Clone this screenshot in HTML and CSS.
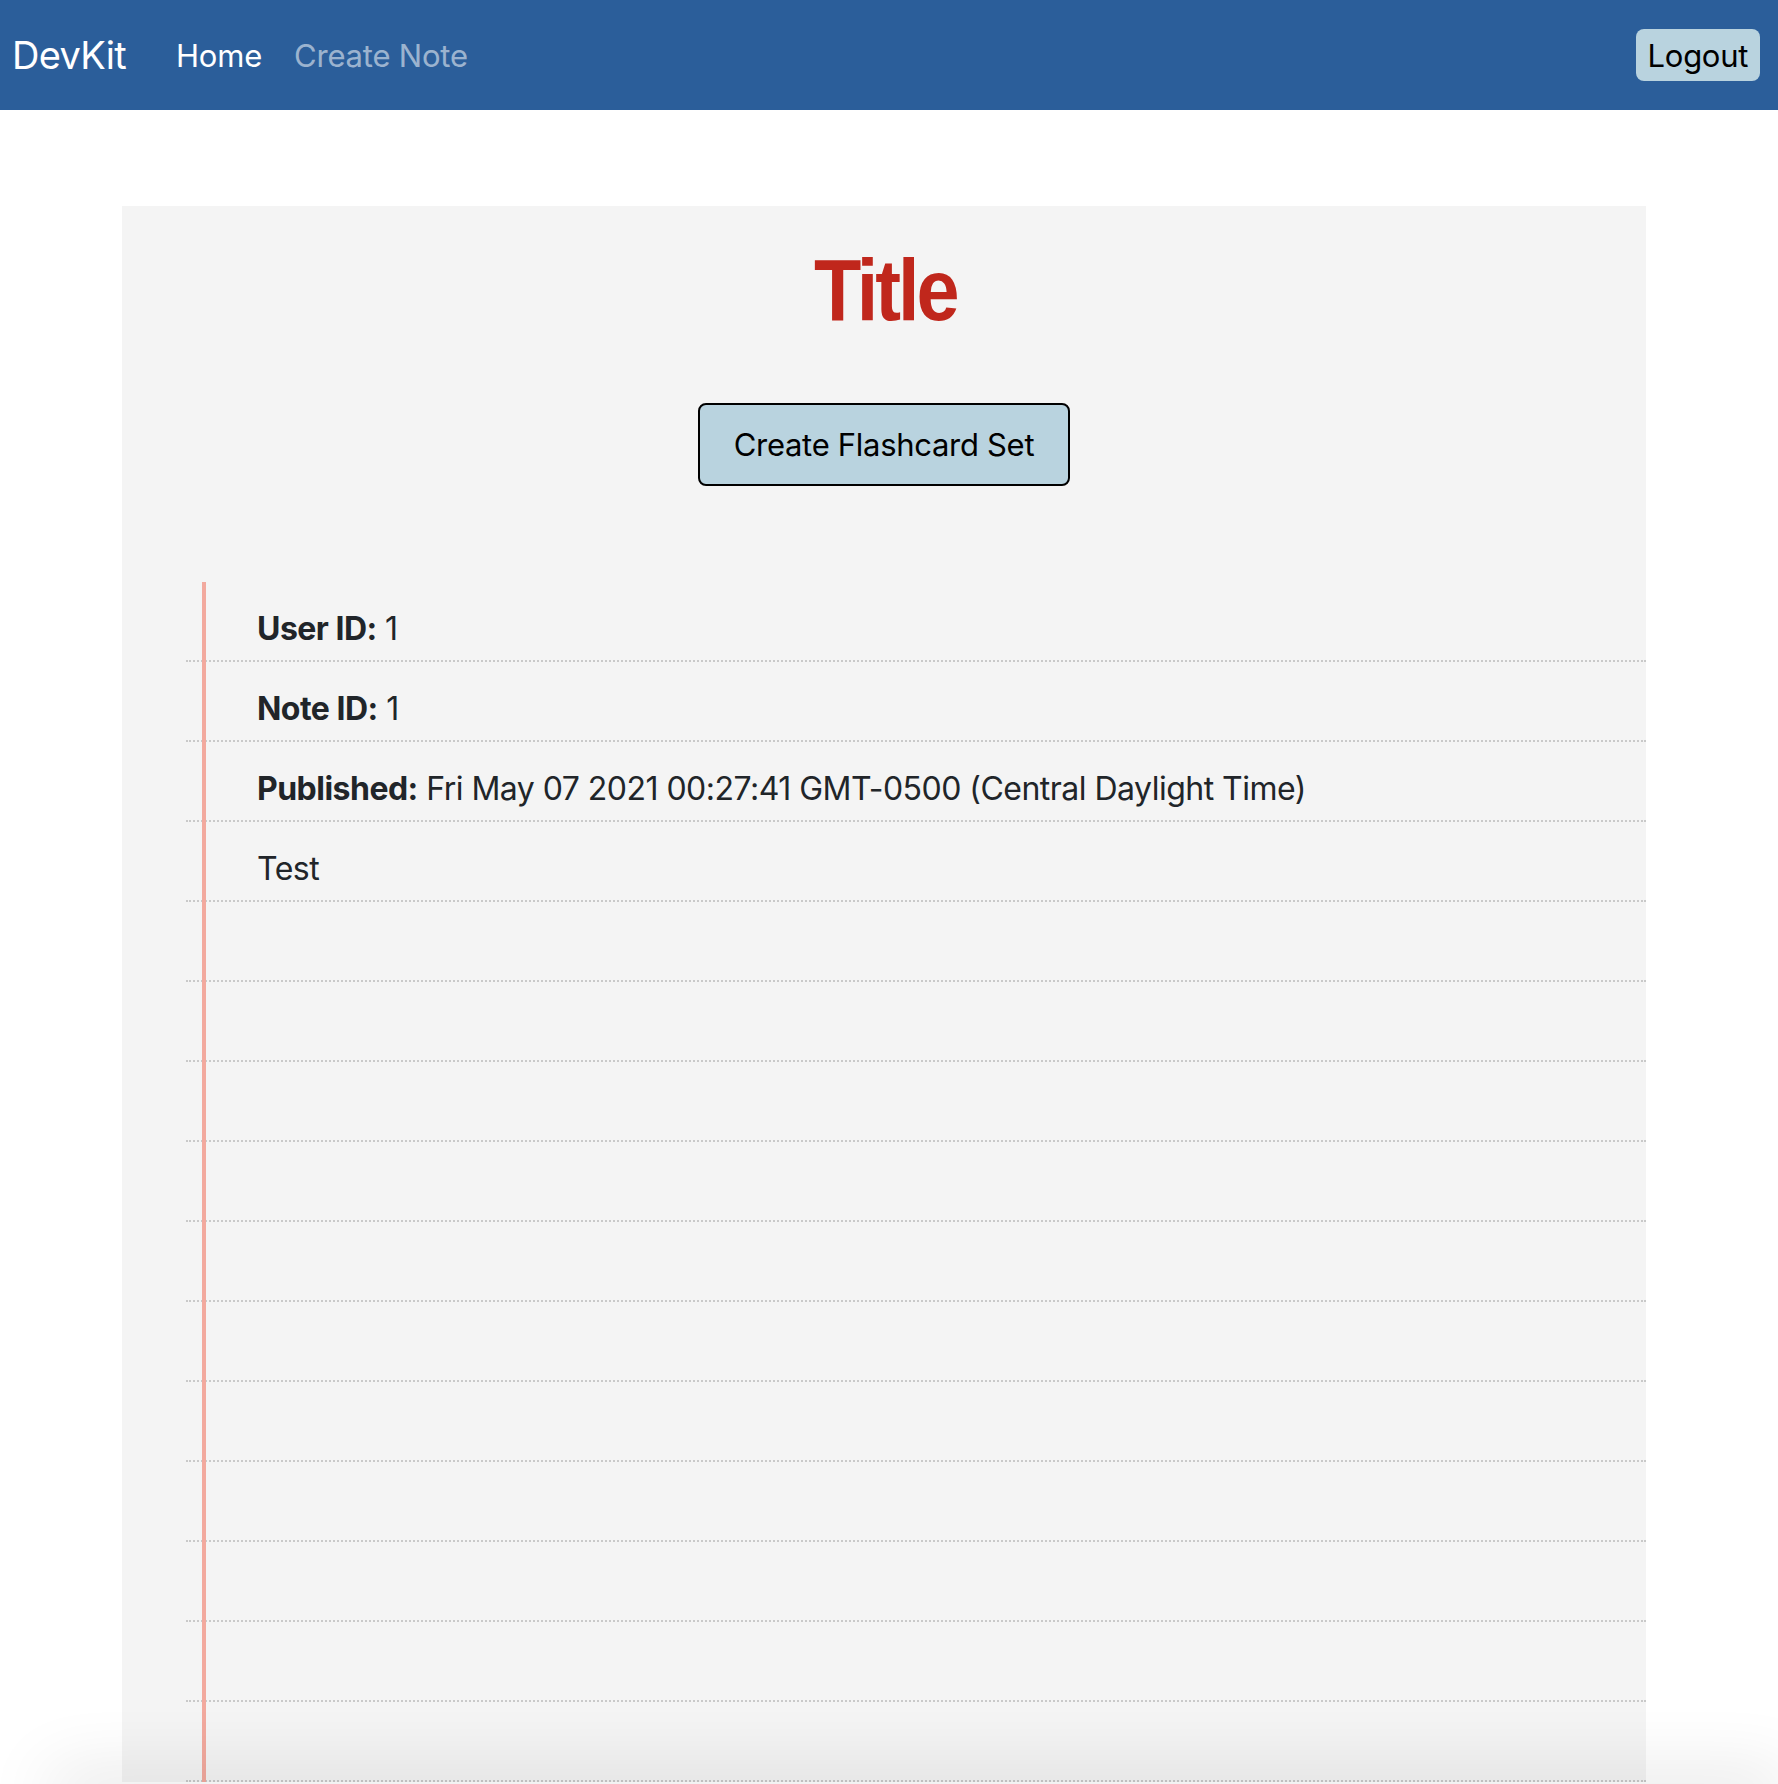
FILE: index.html
```html
<!DOCTYPE html>
<html lang="en">
<head>
<meta charset="utf-8">
<title>DevKit - Note</title>
<link rel="stylesheet" href="styles.css">
</head>
<body>
<nav class="navbar">
  <a class="brand" href="#">DevKit</a>
  <div class="nav-links">
    <a class="nav-link active" href="#">Home</a>
    <a class="nav-link" href="#">Create Note</a>
  </div>
  <button class="logout" type="button">Logout</button>
</nav>
<main class="page">
  <section class="note">
    <h1 class="note-title"><span class="title-text">Title</span></h1>
    <button class="flash-btn" type="button">Create Flashcard Set</button>
    <ul class="paper">
      <li><strong>User ID:</strong> 1</li>
      <li><strong>Note ID:</strong> 1</li>
      <li><strong>Published:</strong> Fri May 07 2021 00:27:41 GMT-0500 (Central Daylight Time)</li>
      <li>Test</li>
      <li></li>
      <li></li>
      <li></li>
      <li></li>
      <li></li>
      <li></li>
      <li></li>
      <li></li>
      <li></li>
      <li></li>
      <li></li>
    </ul>
  </section>
</main>
<div class="bottom-shade"></div>
</body>
</html>
```
FILE: styles.css
```css
* { box-sizing: border-box; }

html, body {
  margin: 0;
  padding: 0;
  background: #ffffff;
}

body {
  font-family: Inter, "Noto Sans", "Liberation Sans", sans-serif;
  color: #212529;
  overflow: hidden;
}

.navbar {
  height: 110px;
  background: #2b5e9a;
  display: flex;
  align-items: center;
  padding: 0 18px 0 12px;
}

.brand {
  color: #ffffff;
  text-decoration: none;
  font-size: 38px;
  letter-spacing: -0.7px;
  margin-right: 50px;
}

.nav-links {
  display: flex;
  gap: 32px;
}

.nav-link {
  font-size: 31px;
  text-decoration: none;
  color: rgba(255, 255, 255, 0.55);
  letter-spacing: -0.2px;
}

.nav-link.active {
  color: #ffffff;
}

.logout {
  margin-left: auto;
  background: #b9d3df;
  border: none;
  border-radius: 8px;
  height: 52px;
  padding: 0 12px;
  font-family: inherit;
  font-size: 31px;
  color: #000000;
  letter-spacing: -0.3px;
}

.page {
  padding-top: 96px;
  padding-left: 122px;
}

.note {
  width: 1524px;
  background: #f4f4f4;
  text-align: center;
  padding-top: 32px;
}

.note-title {
  margin: 0;
  font-family: "Liberation Sans", Arial, sans-serif;
  font-weight: 700;
  font-size: 88px;
  line-height: 104px;
  color: #c0271c;
}

.title-text {
  display: inline-block;
  letter-spacing: -3.5px;
  text-indent: 0;
  padding-left: 3.5px;
  transform: scaleX(0.88);
}

.flash-btn {
  margin-top: 61px;
  width: 372px;
  height: 83px;
  background: #b9d3df;
  border: 2px solid #000000;
  border-radius: 8px;
  font-family: inherit;
  font-size: 31px;
  color: #000000;
  letter-spacing: -0.3px;
}

.paper {
  position: relative;
  list-style: none;
  margin: 96px 0 0 64px;
  padding: 0;
  text-align: left;
}

.paper::before {
  content: "";
  position: absolute;
  left: 16px;
  top: 0;
  bottom: 0;
  width: 4px;
  background: #f2a99e;
}

.paper li {
  height: 80px;
  padding: 27px 0 0 71px;
  border-bottom: 2px dotted #c9c9c9;
  font-size: 32px;
  line-height: 40px;
  letter-spacing: -0.52px;
}

.paper li strong {
  font-weight: 700;
}

.bottom-shade {
  position: fixed;
  left: 60px;
  right: 0;
  bottom: -20px;
  height: 20px;
  box-shadow: 0 0 70px 10px rgba(0, 0, 0, 0.12);
}
```
